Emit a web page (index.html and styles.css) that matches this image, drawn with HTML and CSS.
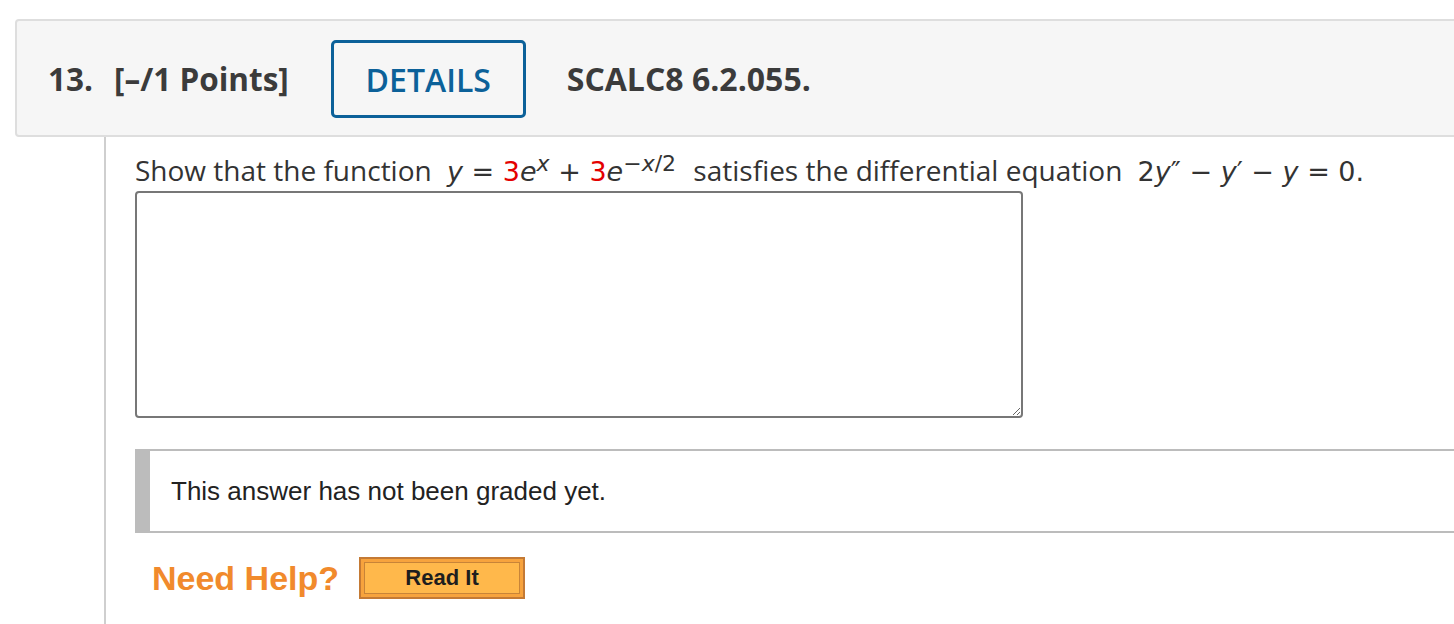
FILE: index.html
```html
<!DOCTYPE html>
<html>
<head>
<meta charset="utf-8">
<link rel="stylesheet" href="styles.css">
</head>
<body>
<div class="page">
  <div class="q-header">
    <span class="q-num">13.</span>
    <span class="q-points">[–/1 Points]</span>
    <button class="details-btn">DETAILS</button>
    <span class="q-ref">SCALC8 6.2.055.</span>
  </div>
  <div class="q-body">
    <p class="q-text">Show that the function <span class="math"><i>y</i> = <span class="red">3</span><i>e</i><sup><i>x</i></sup> + <span class="red">3</span><i>e</i><sup>−<i>x</i>/2</sup></span> satisfies the differential equation <span class="math eq">2<i>y</i>″ − <i>y</i>′ − <i>y</i> = 0.</span></p>
    <textarea class="answer"></textarea>
    <div class="grade-box">This answer has not been graded yet.</div>
    <div class="help-row">
      <span class="need-help">Need Help?</span>
      <span class="read-it"><span class="read-it-inner">Read It</span></span>
    </div>
  </div>
</div>
</body>
</html>
```
FILE: styles.css
```css
html, body {
  margin: 0;
  padding: 0;
  background: #fff;
}
.page {
  padding-top: 19px;
  overflow: hidden;
  height: 605px;
}
.q-header {
  margin-left: 15px;
  margin-right: -10px;
  height: 114px;
  border: 2px solid #dedede;
  border-radius: 4px;
  background: #f6f6f6;
  display: flex;
  align-items: center;
  padding-left: 31px;
  font-family: "Open Sans", sans-serif;
  font-weight: 700;
  font-size: 31.5px;
  color: #3b3b3b;
}
.q-num {
  margin-right: 21px;
}
.q-points {
  margin-right: 42px;
}
.details-btn {
  box-sizing: border-box;
  width: 195px;
  height: 78px;
  margin-top: 2px;
  border: 3px solid #0c6199;
  border-radius: 5px;
  background: #f6f6f6;
  color: #0c6199;
  font-family: "Open Sans", sans-serif;
  font-weight: 600;
  font-size: 32px;
  padding: 0;
  margin-right: 41px;
}
.q-ref {
  font-size: 32px;
}
.q-body {
  margin-left: 104px;
  border-left: 2px solid #cfcfcf;
  padding-left: 29px;
  padding-top: 15px;
  height: 520px;
}
.q-text {
  margin: 0;
  height: 36px;
  font-family: "Open Sans", sans-serif;
  font-size: 28px;
  line-height: 36px;
  color: #333;
  white-space: nowrap;
}
.math {
  font-family: "DejaVu Sans", Verdana, sans-serif;
  font-size: 27px;
  line-height: 1;
  margin: 0 10px 0 8px;
}
.math.eq {
  font-size: 27px;
}
.math sup {
  font-size: 22px;
  line-height: 0;
  vertical-align: 10px;
}
.red {
  color: #e40000;
}
.answer {
  display: block;
  box-sizing: border-box;
  width: 888px;
  height: 227px;
  margin: 3px 0 0 0;
  border: 2px solid #777;
  border-radius: 4px;
  background: #fff;
}
.grade-box {
  margin-top: 31px;
  height: 80px;
  border-top: 2px solid #bcbcbc;
  border-bottom: 2px solid #bcbcbc;
  border-left: 15px solid #bcbcbc;
  padding-left: 21px;
  display: flex;
  align-items: center;
  font-family: "Liberation Sans", Arial, sans-serif;
  font-size: 26px;
  color: #222;
}
.help-row {
  margin-top: 24px;
  display: flex;
  align-items: center;
  padding-left: 17px;
}
.need-help {
  font-family: "Liberation Sans", Arial, sans-serif;
  font-weight: 700;
  font-size: 34px;
  color: #f18a2c;
  margin-right: 20px;
}
.read-it {
  box-sizing: border-box;
  width: 166px;
  height: 42px;
  border: 2px solid #c47a35;
  background: #f7a33d;
  padding: 3px;
  display: flex;
}
.read-it-inner {
  flex: 1;
  border: 1px solid #c88438;
  background: #ffb84b;
  display: flex;
  align-items: center;
  justify-content: center;
  font-family: "Liberation Sans", Arial, sans-serif;
  font-weight: 700;
  font-size: 22px;
  color: #1e1e1e;
}
```
